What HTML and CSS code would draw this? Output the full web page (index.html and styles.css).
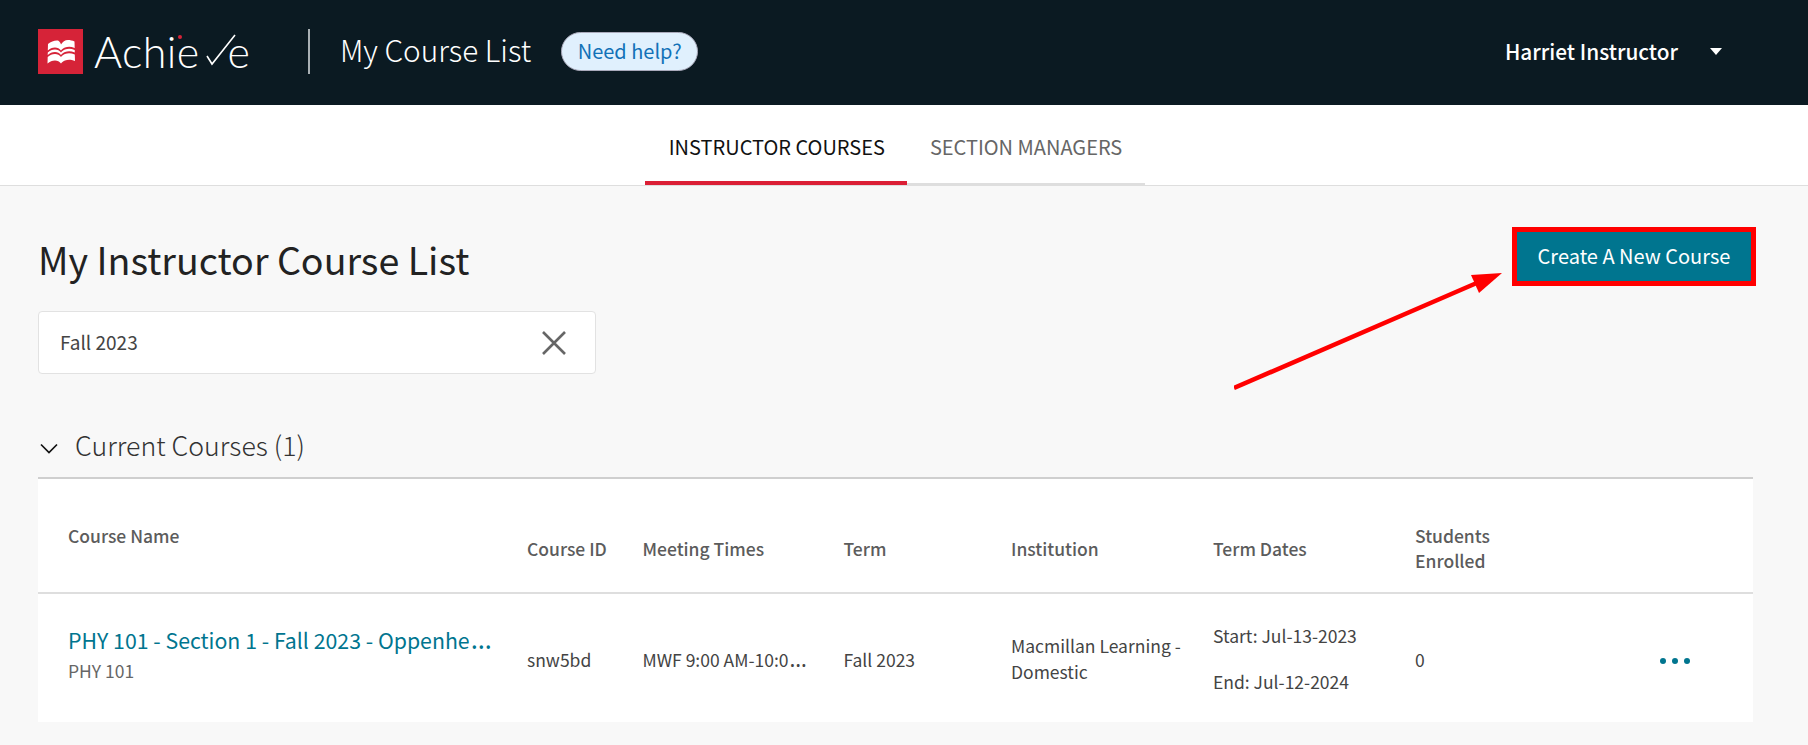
FILE: index.html
```html
<!DOCTYPE html>
<html lang="en">
<head>
<meta charset="utf-8">
<title>My Course List</title>
<link rel="stylesheet" href="styles.css">
</head>
<body>
<header class="topbar">
  <div class="logo">
    <svg class="logo-mark" viewBox="0 0 45 45" width="45" height="45" aria-hidden="true">
      <rect width="45" height="45" fill="#d62338"/>
      <path fill="#fff" d="M10 15C13 12.500 17 11 20 11.500 21.500 12 22.500 14 23 15.500 24.500 13 27 11 30 11 32 11 34.500 11.500 36.500 12.500L36.700 19C33 17.500 30 17.500 27 18.500 25.500 19 24 20 23 21.500 21.500 19.500 19.500 18.500 17 18.500 14 18.500 12 19.500 9.800 21.500Z"/>
      <path fill="#fff" d="M9.800 23.500C12 21.500 14 20.500 17 20.500 19.500 20.500 21.500 21.500 23 23.500 24 22 25.500 21 27 20.500 30 19.500 33 19.500 36.700 21L36.800 23.500C33 22 30 22 27 23 25.500 23.500 24 24.500 23 26 21.500 24 19.500 23 17 23 14 23 12 24 9.700 26Z"/>
      <path fill="#fff" d="M9.700 28C12 26 14 25 17 25 19.500 25 21.500 26 23 28 24 26.500 25.500 25.500 27 25 30 24 33 24 36.800 25.500L37 32C33 30.500 30 30.500 27 31.500 25.500 32 24 33 23 34.500 21.500 32.500 19.500 31.500 17 31.500 14 31.500 12 32.500 9.500 34.500Z"/>
    </svg>
    <span class="wordmark">Achie<svg class="check" viewBox="0 0 30 32" width="30" height="32" aria-hidden="true"><path d="M1 22L6 30 29 1" fill="none" stroke="#fff" stroke-width="1.600"/></svg>e<i class="logo-dot"></i></span>
  </div>
  <span class="divider"></span>
  <span class="page-name">My Course List</span>
  <a class="help" href="#">Need help?</a>
  <div class="user">
    <span class="user-name">Harriet Instructor</span>
    <span class="caret"></span>
  </div>
</header>

<nav class="tabs">
  <a class="tab active" href="#">INSTRUCTOR COURSES</a>
  <a class="tab" href="#">SECTION MANAGERS</a>
</nav>

<main class="content">
  <div class="page-head">
    <h1 class="title">My Instructor Course List</h1>
    <button class="create">Create A New Course</button>
  </div>
  <svg class="arrow" viewBox="0 0 280 125" width="280" height="125" aria-hidden="true">
    <path d="M0 117L245 11" stroke="#f00" stroke-width="4.500" fill="none"/>
    <path d="M268 2L237 4 245 22z" fill="#f00"/>
  </svg>

  <div class="filter">
    <span class="filter-value">Fall 2023</span>
    <svg class="clear" viewBox="0 0 24 24" width="24" height="24" aria-hidden="true"><path d="M1 1l22 22M23 1L1 23" stroke="#666" stroke-width="2.600" fill="none"/></svg>
  </div>

  <div class="section-head">
    <svg class="chevron" viewBox="0 0 18 11" width="18" height="11" aria-hidden="true"><path d="M1 1.500l8 8 8-8" stroke="#111" stroke-width="1.700" fill="none"/></svg>
    <h2 class="section-title">Current Courses (1)</h2>
  </div>

  <div class="table">
    <div class="row head-row">
      <div class="th top">Course Name</div>
      <div class="th">Course ID</div>
      <div class="th">Meeting Times</div>
      <div class="th">Term</div>
      <div class="th">Institution</div>
      <div class="th">Term Dates</div>
      <div class="th">Students<br>Enrolled</div>
      <div class="th"></div>
    </div>
    <div class="row body-row">
      <div class="td name-cell">
        <a class="course-link" href="#">PHY 101 - Section 1 - Fall 2023 - Oppenhe<span class="ell">…</span></a>
        <span class="course-code">PHY 101</span>
      </div>
      <div class="td">snw5bd</div>
      <div class="td">MWF 9:00 AM-10:0<span class="ell">…</span></div>
      <div class="td">Fall 2023</div>
      <div class="td inst">Macmillan Learning -<br>Domestic</div>
      <div class="td dates"><span>Start: Jul-13-2023</span><span>End: Jul-12-2024</span></div>
      <div class="td">0</div>
      <div class="td"><span class="dots"><i></i><i></i><i></i></span></div>
    </div>
  </div>
</main>
</body>
</html>
```

FILE: styles.css
```css
* { box-sizing: border-box; }
html, body { margin: 0; padding: 0; }
body {
  position: relative;
  height: 745px;
  overflow: hidden;
  background: #f8f8f8;
  font-family: "Noto Sans CJK SC", "Noto Sans", sans-serif;
  color: #333;
}
a { text-decoration: none; }

.topbar {
  height: 105px;
  background: #0b1a22;
  color: #fff;
  display: flex;
  align-items: center;
  padding: 0 0 2px 38px;
}
.logo { display: flex; align-items: center; width: 270px; }
.logo-mark { display: block; flex: none; }
.wordmark {
  position: relative;
  margin-left: 11px;
  font-family: Lato, sans-serif;
  font-weight: 300;
  font-size: 43px;
  line-height: 45px;
  letter-spacing: 0.400px;
  display: flex;
  align-items: center;
}
.check { display: block; flex: none; margin: -3px -8px 0 6px; }
.logo-dot {
  position: absolute;
  left: 84px;
  top: 6px;
  width: 4px;
  height: 4px;
  border-radius: 50%;
  background: #d62338;
}
.divider { width: 2px; height: 45px; background: #a9b0b4; }
.page-name { margin-left: 30px; font-size: 29.700px; font-weight: 300; line-height: 40px; padding-bottom: 4px; }
.help {
  margin-left: 30px;
  width: 137px;
  height: 39px;
  border: 1px solid #aab;
  border-radius: 20px;
  background: #e0f0fd;
  color: #1272b8;
  font-size: 20px;
  padding-bottom: 2px;
  display: flex;
  align-items: center;
  justify-content: center;
}
.user { margin-left: auto; margin-right: 86px; display: flex; align-items: center; }
.user-name { font-size: 20.800px; font-weight: 500; line-height: 30px; padding-bottom: 2px; }
.caret {
  margin-left: 32px;
  width: 0;
  height: 0;
  border-left: 6.500px solid transparent;
  border-right: 6.500px solid transparent;
  border-top: 7px solid #fff;
}

.tabs {
  height: 80px;
  background: #fff;
  box-shadow: 0 1px 0 #dedede;
  display: flex;
  justify-content: center;
  padding-right: 18px;
}
.tab {
  height: 80px;
  padding: 28px 23px 0;
  font-size: 20px;
  line-height: 27px;
  color: #666;
  border-bottom: 2px solid #dedede;
}
.tab.active { color: #111; border-bottom: 4px solid #db1f35; padding: 28px 22px 0 24px; }

.content { padding: 0 55px 0 38px; }
.page-head {
  padding-top: 42px;
  display: flex;
  align-items: center;
  justify-content: space-between;
  height: 101px;
}
.title { margin: 4px 0 0; font-size: 37.600px; font-weight: 400; line-height: 50px; color: #222; }
.create {
  width: 244px;
  height: 59px;
  margin-right: -3px;
  border: 5px solid #f00;
  background: #00758f;
  color: #fff;
  font-family: inherit;
  font-size: 20px;
  padding: 0 0 3px;
}
.arrow { position: absolute; left: 1234px; top: 271px; }

.filter {
  margin-top: 25px;
  width: 558px;
  height: 63px;
  background: #fff;
  border: 1px solid #e2e2e2;
  border-radius: 4px;
  display: flex;
  align-items: center;
  justify-content: space-between;
  padding: 0 29px 0 21px;
}
.filter-value { font-size: 19px; line-height: 24px; color: #444; padding-bottom: 2px; }
.clear { display: block; }

.section-head {
  margin-top: 50px;
  height: 55px;
  border-bottom: 2px solid #cfcfcf;
  display: flex;
  align-items: center;
  padding-bottom: 11px;
}
.chevron { margin-left: 2px; margin-top: 6px; display: block; }
.section-title { margin: 0 0 0 17px; font-size: 26.700px; font-weight: 300; line-height: 36px; color: #333; }

.table { background: #fff; }
.row {
  display: grid;
  grid-template-columns: 459px 115.500px 201px 167.500px 202px 202px 245px 1fr;
  padding-left: 30px;
}
.head-row {
  height: 115px;
  padding-top: 25px;
  border-bottom: 2px solid #dedede;
  align-items: center;
}
.th { font-size: 17.500px; font-weight: 500; line-height: 25px; color: #5c5c5c; }
.th.top { align-self: start; padding-top: 19px; }
.body-row { height: 128px; align-items: center; }
.td { font-size: 17.500px; line-height: 26px; color: #444; padding-top: 4px; }
.ell { font-family: "Noto Sans", sans-serif; font-size: 1.250em; line-height: 1em; margin-left: 1px; }
.name-cell { display: flex; flex-direction: column; padding: 0 0 7px; }
.course-link {
  font-size: 21.300px;
  line-height: 28px;
  color: #00758f;
  white-space: nowrap;
}
.course-code { font-size: 17.500px; line-height: 24px; margin-top: 5px; color: #666; }
.inst { padding-top: 2px; }
.dates { display: flex; flex-direction: column; gap: 20px; padding-top: 2px; }
.dots { display: flex; gap: 6px; margin-top: 2px; }
.dots i { width: 6px; height: 6px; border-radius: 50%; background: #00758f; }
```
